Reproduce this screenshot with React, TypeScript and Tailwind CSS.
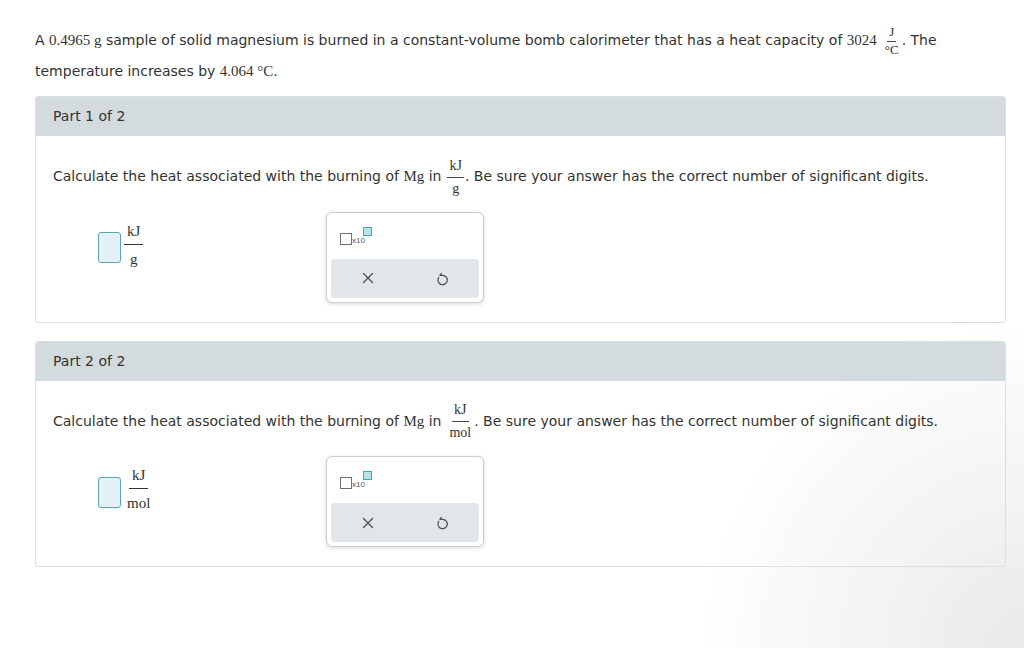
import React from "react";

const serif = "font-['Liberation_Serif','Times_New_Roman',serif]";

const Frac = ({ top, bottom, size = "text-[14px] leading-[14px]", pb = "pb-[4px]", pt = "pt-[4px]" }: { top: string; bottom: string; size?: string; pb?: string; pt?: string }) => (
  <span className={`inline-flex flex-col items-center align-middle ${serif} ${size} ml-[6px] mr-[1px]`}>
    <span className={`px-[2px] border-b border-[#444] ${pb}`}>{top}</span>
    <span className={`px-[2px] ${pt}`}>{bottom}</span>
  </span>
);

// undo arrow, drawn to match the ALEKS glyph
const UndoIcon = () => (
  <svg width="15" height="15" viewBox="0 0 16 16" fill="none" stroke="#4a4f55" strokeWidth="1.3" strokeLinecap="round" strokeLinejoin="round">
    <path d="M4 6.8 A5 5 0 1 0 8.2 4.6" />
    <path d="M8.2 4.6 L5.2 4.6 L6.8 2.6" />
  </svg>
);

const AnswerTools = () => (
  <div className="w-[158px] h-[91px] rounded-[6px] border border-[#c9cdd0] bg-white shadow-[0_1px_4px_rgba(0,0,0,0.15)] flex flex-col">
    <div className="h-[46px] pl-[13px] pt-[14px] flex items-start">
      <div className="mt-[6px] w-[12px] h-[12px] border border-[#6b7075]" />
      <span className="mt-[10px] text-[8px] leading-[8px] text-[#555] font-['Liberation_Sans',sans-serif]">x10</span>
      <div className="w-[9px] h-[9px] border border-[#37aeb8] bg-[#b7e2e8] -ml-[2px]" />
    </div>
    <div className="mx-[4px] mb-[4px] flex-1 rounded-[4px] bg-[#e2e6e9] grid grid-cols-2 items-center justify-items-center">
      <svg width="12" height="12" viewBox="0 0 12 12" stroke="#4a4f55" strokeWidth="1.3" strokeLinecap="round">
        <path d="M1.5 1.5 L10.5 10.5 M10.5 1.5 L1.5 10.5" />
      </svg>
      <UndoIcon />
    </div>
  </div>
);

const Part = ({ label, unit }: { label: string; unit: string }) => (
  <div className="border border-[#dadfe1] rounded-[3px] overflow-hidden">
    <div className="h-[39px] bg-[#d3dbde] px-[17px] flex items-center">{label}</div>
    <div className="pl-[17px] pt-[21px] leading-[38px]">
      Calculate the heat associated with the burning of <span className={`${serif} text-[15px]`}>Mg</span> in
      <Frac top="kJ" bottom={unit} />. Be sure your answer has the correct number of significant digits.
    </div>
    <div className="flex items-start mt-[16px] pb-[19px]">
      <div className="ml-[62px] w-[228px] mt-[17px] flex items-center">
        <div className="w-[23px] h-[31px] rounded-[3px] border border-[#5ba6ae] bg-[#e4f2f7]" />
        <span className={`inline-flex flex-col items-center ${serif} text-[15px] leading-[16px] ml-[3px] -mt-[6px]`}>
          <span className="px-[3px] border-b border-[#333] pb-[5px]">kJ</span>
          <span className="px-[3px] pt-[6px]">{unit}</span>
        </span>
      </div>
      <AnswerTools />
    </div>
  </div>
);

export default function App() {
  return (
    <div className="min-h-[648px] w-full bg-[radial-gradient(circle_at_100%_100%,#e9e9e9_0px,#ffffff_330px)] font-['DejaVu_Sans','Liberation_Sans',sans-serif] text-[14px] text-[#333]">
      <div className="pl-[35px] pr-[18px] pt-[25px]">
        <p className="leading-[30px]">
          A <span className={`${serif} text-[15px]`}>0.4965 g</span> sample of solid magnesium is burned in a constant-volume bomb calorimeter that has a heat capacity of{" "}
          <span className={`${serif} text-[15px]`}>3024</span>
          <Frac top="J" bottom="°C" size="text-[13px] leading-[12px]" pb="pb-[3px]" pt="pt-[2px]" />. The temperature increases by{" "}
          <span className={`${serif} text-[15px]`}>4.064 °C</span>.
        </p>
        <div className="mt-[10px] flex flex-col gap-[18px]">
          <Part label="Part 1 of 2" unit="g" />
          <Part label="Part 2 of 2" unit="mol" />
        </div>
      </div>
    </div>
  );
}
